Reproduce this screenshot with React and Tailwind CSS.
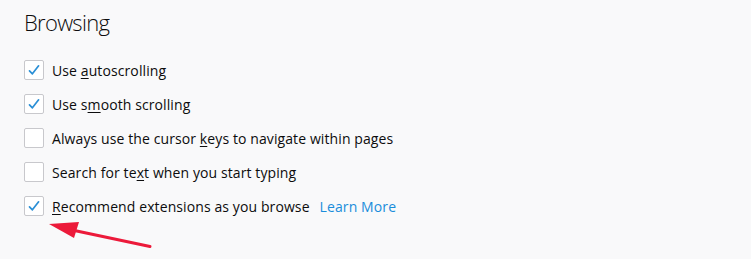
import React from "react";

function Check({ checked }) {
  return (
    <div className="w-5 h-5 shrink-0 rounded-[2px] border border-[#c8c8cc] bg-white flex items-center justify-center">
      {checked && (
        <svg width="14" height="14" viewBox="0 0 14 14" fill="none">
          <path d="M2.5 7.8 L5.4 10.8 L11.6 2.8" stroke="#2a8fd6" strokeWidth="1.7" strokeLinecap="round" strokeLinejoin="round" />
        </svg>
      )}
    </div>
  );
}

function Row({ checked, children }) {
  return (
    <div className="flex items-center gap-2 h-[34px]">
      <Check checked={checked} />
      <div className="flex items-center">{children}</div>
    </div>
  );
}

export default function App() {
  return (
    <div
      className="relative w-[751px] h-[259px] bg-[#f9f9fa] text-[#0c0c0d] overflow-hidden"
      style={{ fontFamily: '"Open Sans", "Noto Sans", sans-serif' }}
    >
      <div className="pl-[24px] pt-[6px]">
        <h1 className="text-[22px] font-light leading-[32px] tracking-[-0.7px]">Browsing</h1>
        <div className="mt-[15px] flex flex-col text-[14px] tracking-[0.1px]">
          <Row checked>
            <span>Use <u className="underline-offset-2">a</u>utoscrolling</span>
          </Row>
          <Row checked>
            <span>Use s<u className="underline-offset-2">m</u>ooth scrolling</span>
          </Row>
          <Row>
            <span>Always use the cursor <u className="underline-offset-2">k</u>eys to navigate within pages</span>
          </Row>
          <Row>
            <span>Search for te<u className="underline-offset-2">x</u>t when you start typing</span>
          </Row>
          <Row checked>
            <span><u className="underline-offset-2">R</u>ecommend extensions as you browse</span>
            <span className="ml-[10px] text-[#1a8ddb]">Learn More</span>
          </Row>
        </div>
      </div>
      <svg className="absolute left-0 top-0" width="751" height="259" viewBox="0 0 751 259">
        <line x1="150" y1="246.5" x2="72" y2="230" stroke="#ec1a3a" strokeWidth="3" strokeLinecap="round" />
        <polygon points="49,224 79,222 74,238" fill="#ec1a3a" />
      </svg>
    </div>
  );
}
